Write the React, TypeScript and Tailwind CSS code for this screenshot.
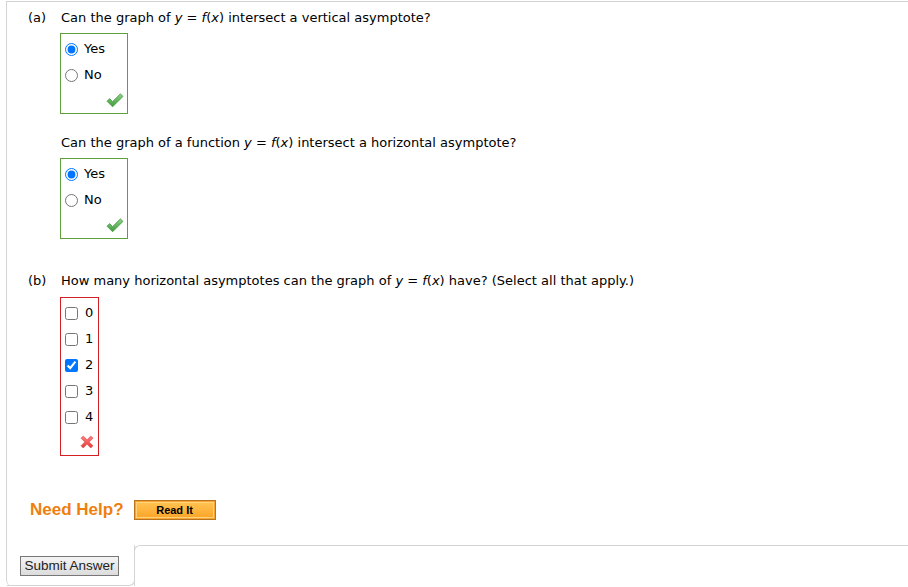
import React from 'react'

const fontV = { fontFamily: '"DejaVu Sans", Verdana, sans-serif' }

function GreenCheck() {
  return (
    <svg width="18" height="15" viewBox="0 0 18 15" className="block">
      <defs>
        <linearGradient id="gc" x1="0" y1="0" x2="0" y2="1">
          <stop offset="0" stopColor="#8fd18a" />
          <stop offset="1" stopColor="#3e9a3a" />
        </linearGradient>
      </defs>
      <path
        d="M1 8.2 L3.6 5.6 L6.6 8.6 L14.4 0.8 L17 3.4 L6.6 13.8 Z"
        fill="url(#gc)"
        stroke="#4a9a46"
        strokeWidth="0.8"
        strokeLinejoin="round"
      />
    </svg>
  )
}

function RedCross() {
  return (
    <svg width="14" height="14" viewBox="0 0 14 14" className="block">
      <defs>
        <linearGradient id="rc" x1="0" y1="0" x2="0" y2="1">
          <stop offset="0" stopColor="#ff8080" />
          <stop offset="1" stopColor="#e23b3b" />
        </linearGradient>
      </defs>
      <path
        d="M1 3.2 L3.2 1 L7 4.8 L10.8 1 L13 3.2 L9.2 7 L13 10.8 L10.8 13 L7 9.2 L3.2 13 L1 10.8 L4.8 7 Z"
        fill="url(#rc)"
        stroke="#e04a4a"
        strokeWidth="0.6"
        strokeLinejoin="round"
      />
    </svg>
  )
}

function Fx() {
  return (
    <>
      <i>y</i> = <i>f</i>(<i>x</i>)
    </>
  )
}

function YesNo() {
  return (
    <div className="ml-[32px] mt-[7px] w-[68px] border border-[#5fa03a] pt-[2px]">
      {['Yes', 'No'].map((opt, i) => (
        <label key={opt} className="flex h-[26px] items-center">
          <input
            type="radio"
            readOnly
            checked={i === 0}
            className="m-0 ml-[4px] h-[13px] w-[13px] accent-[#0075ff]"
          />
          <span className="ml-[6px]">{opt}</span>
        </label>
      ))}
      <div className="flex h-[25px] items-center justify-end pr-[3px] pb-[1px]">
        <GreenCheck />
      </div>
    </div>
  )
}

export default function App() {
  return (
    <div className="h-[587px] w-[908px] overflow-hidden bg-white pl-[6px] pt-px">
      <div
        className="flex h-[585px] flex-col rounded-bl-md border-l border-t border-[#d4d4d4] text-[13px] leading-[16px] text-black"
        style={fontV}
      >
        <div className="flex-1 pl-[21px] pt-[8px]">
          {/* part a */}
          <div className="flex">
            <span className="w-[33px]">(a)</span>
            <span>
              Can the graph of <Fx /> intersect a vertical asymptote?
            </span>
          </div>
          <YesNo />

          <div className="ml-[33px] mt-[21px]">
            Can the graph of a function <Fx /> intersect a horizontal asymptote?
          </div>
          <YesNo />

          {/* part b */}
          <div className="mt-[34px] flex">
            <span className="w-[33px]">(b)</span>
            <span>
              How many horizontal asymptotes can the graph of <Fx /> have? (Select all that apply.)
            </span>
          </div>
          <div className="ml-[32px] mt-[8px] w-[39px] border border-[#d42020] pt-[2px]">
            {['0', '1', '2', '3', '4'].map((n) => (
              <label key={n} className="flex h-[26px] items-center">
                <input
                  type="checkbox"
                  readOnly
                  checked={n === '2'}
                  className="m-0 ml-[4px] h-[13px] w-[13px] accent-[#0075ff]"
                />
                <span className="ml-[7px]">{n}</span>
              </label>
            ))}
            <div className="flex h-[25px] items-center justify-end pr-[4px] pb-[1px]">
              <RedCross />
            </div>
          </div>

          {/* help */}
          <div className="ml-[2px] mt-[44px] flex items-center gap-[10px]" style={{ fontFamily: '"Liberation Sans", Arial, sans-serif' }}>
            <span className="text-[17px] font-bold leading-[20px] text-[#ee7f0e]">Need Help?</span>
            <span className="flex h-[20px] w-[82px] items-center justify-center border border-[#b8731c] bg-[#f7a635] p-px">
              <span className="flex h-full w-full items-center justify-center border border-[#ffd27a] bg-gradient-to-b from-[#ffc24f] to-[#fba62a] text-[11px] font-bold leading-none text-black">
                Read It
              </span>
            </span>
          </div>
        </div>

        {/* bottom tab */}
        <div className="flex h-[41px]">
          <div className="flex w-[128px] items-center rounded-br-md border-r border-b border-[#d4d4d4] pl-[13px] pt-[2px]">
            <button
              className="h-[20px] w-[99px] border border-[#777] bg-gradient-to-b from-[#f4f4f4] to-[#dcdcdc] text-[13.5px] leading-none text-[#222]"
              style={{ fontFamily: '"Liberation Sans", Arial, sans-serif' }}
            >
              Submit Answer
            </button>
          </div>
          <div className="-ml-px flex-1 rounded-tl-md border-t border-l border-[#d4d4d4]" />
        </div>
      </div>
    </div>
  )
}
